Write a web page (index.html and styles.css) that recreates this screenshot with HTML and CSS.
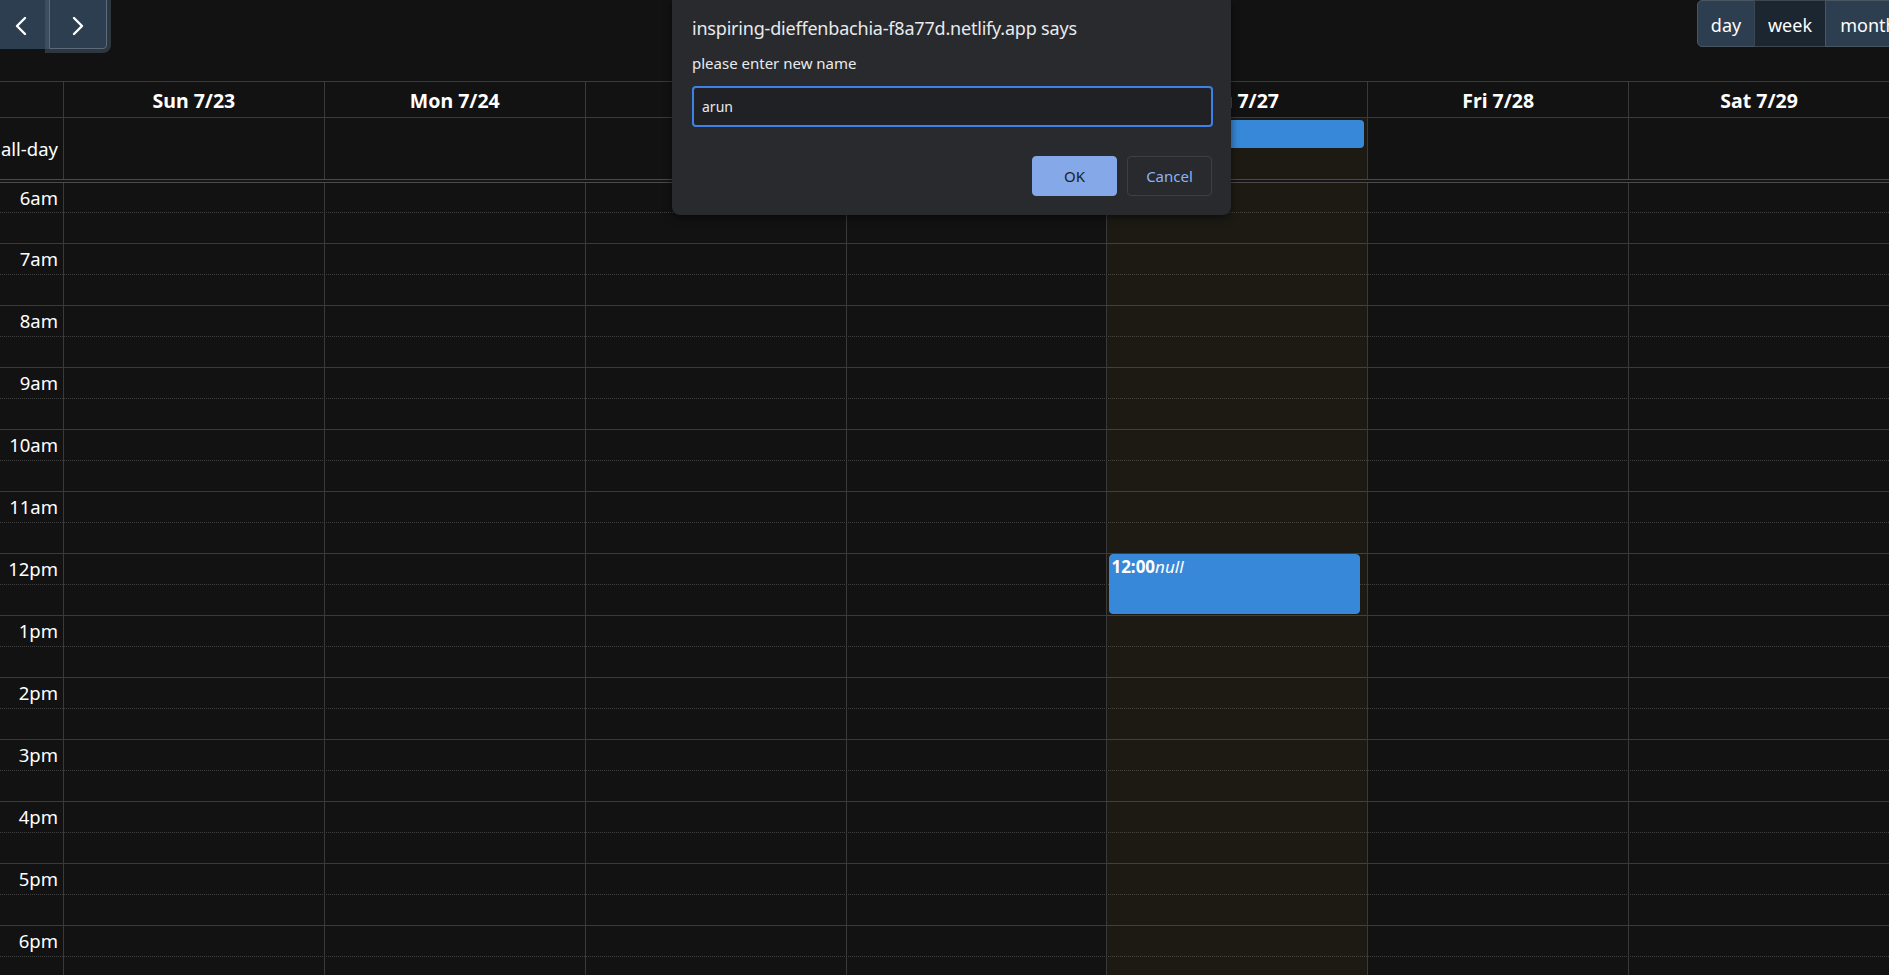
FILE: index.html
```html
<!DOCTYPE html>
<html lang="en">
<head>
<meta charset="utf-8">
<title>Calendar</title>
<link rel="stylesheet" href="styles.css">
</head>
<body>
<div class="page">
  <div class="toolbar">
    <div class="btn-group nav">
      <button class="fc-btn nav-btn prev" type="button" aria-label="prev">
        <svg width="14" height="20" viewBox="0 0 14 20"><polyline points="11,2 3,10 11,18" fill="none" stroke="#fff" stroke-width="2.4" stroke-linecap="round" stroke-linejoin="round"/></svg>
      </button>
      <button class="fc-btn nav-btn next focused" type="button" aria-label="next">
        <svg width="14" height="20" viewBox="0 0 14 20"><polyline points="3,2 11,10 3,18" fill="none" stroke="#fff" stroke-width="2.4" stroke-linecap="round" stroke-linejoin="round"/></svg>
      </button>
    </div>
    <div class="btn-group views">
      <button class="fc-btn view-btn day" type="button">day</button>
      <button class="fc-btn view-btn week active" type="button">week</button>
      <button class="fc-btn view-btn month" type="button">month</button>
    </div>
  </div>

  <div class="cal">
    <div class="row head">
      <div class="axis"></div>
      <div class="hcell">Sun 7/23</div>
      <div class="hcell">Mon 7/24</div>
      <div class="hcell">Tue 7/25</div>
      <div class="hcell">Wed 7/26</div>
      <div class="hcell">Thu 7/27</div>
      <div class="hcell">Fri 7/28</div>
      <div class="hcell">Sat 7/29</div>
    </div>
    <div class="row allday">
      <div class="axis label">all-day</div>
      <div class="acell"></div>
      <div class="acell"></div>
      <div class="acell"></div>
      <div class="acell"></div>
      <div class="acell today"><div class="allday-event"></div></div>
      <div class="acell"></div>
      <div class="acell"></div>
    </div>
    <div class="divider"></div>
    <div class="timegrid">
      <div class="slots">
        <div class="slot major"><span class="slot-label">6am</span></div>
        <div class="slot minor"></div>
        <div class="slot major"><span class="slot-label">7am</span></div>
        <div class="slot minor"></div>
        <div class="slot major"><span class="slot-label">8am</span></div>
        <div class="slot minor"></div>
        <div class="slot major"><span class="slot-label">9am</span></div>
        <div class="slot minor"></div>
        <div class="slot major"><span class="slot-label">10am</span></div>
        <div class="slot minor"></div>
        <div class="slot major"><span class="slot-label">11am</span></div>
        <div class="slot minor"></div>
        <div class="slot major"><span class="slot-label">12pm</span></div>
        <div class="slot minor"></div>
        <div class="slot major"><span class="slot-label">1pm</span></div>
        <div class="slot minor"></div>
        <div class="slot major"><span class="slot-label">2pm</span></div>
        <div class="slot minor"></div>
        <div class="slot major"><span class="slot-label">3pm</span></div>
        <div class="slot minor"></div>
        <div class="slot major"><span class="slot-label">4pm</span></div>
        <div class="slot minor"></div>
        <div class="slot major"><span class="slot-label">5pm</span></div>
        <div class="slot minor"></div>
        <div class="slot major"><span class="slot-label">6pm</span></div>
        <div class="slot minor"></div>
      </div>
      <div class="cols">
        <div class="col"></div>
        <div class="col"></div>
        <div class="col"></div>
        <div class="col"></div>
        <div class="col today">
          <div class="event"><b>12:00</b><i>null</i></div>
        </div>
        <div class="col"></div>
        <div class="col"></div>
      </div>
    </div>
  </div>

  <div class="dialog" role="dialog">
    <div class="dlg-title">inspiring-dieffenbachia-f8a77d.netlify.app says</div>
    <div class="dlg-msg">please enter new name</div>
    <div class="dlg-input">arun</div>
    <div class="dlg-actions">
      <button class="dlg-btn ok" type="button">OK</button>
      <button class="dlg-btn cancel" type="button">Cancel</button>
    </div>
  </div>
</div>
</body>
</html>
```

FILE: styles.css
```css
* { box-sizing: border-box; }

html, body {
  margin: 0;
  padding: 0;
  height: 100%;
}

body {
  background: #121212;
  color: #ffffff;
  font-family: "Noto Sans", "Open Sans", sans-serif;
  overflow: hidden;
}

.page {
  position: relative;
  width: 1889px;
  height: 975px;
  overflow: hidden;
}

/* ---------- toolbar ---------- */
.toolbar {
  display: flex;
  justify-content: space-between;
  align-items: flex-start;
  height: 81px;
  margin: 0 -23px 0 -8px;
}

.btn-group {
  display: flex;
}

.fc-btn {
  display: flex;
  align-items: center;
  justify-content: center;
  padding: 0;
  margin: 0;
  background: #2c3e50;
  border: 1px solid #2c3e50;
  color: #ffffff;
  font-family: "Noto Sans", "Open Sans", sans-serif;
  font-size: 18px;
  cursor: pointer;
}

.nav {
  margin-top: -3px;
}

.nav-btn {
  width: 58px;
  height: 52px;
  padding-top: 6px;
}

.nav-btn.prev {
  width: 58px;
  border-radius: 4px 0 0 4px;
}

.nav-btn.next {
  margin-left: -1px;
  border-radius: 0 4px 4px 0;
}

.nav-btn.focused {
  position: relative;
  z-index: 1;
  border-color: #5b6b7b;
  box-shadow: 0 0 0 4px rgba(76, 91, 106, 0.5);
}

.views {
  height: 47px;
}

.view-btn {
  height: 47px;
  padding-top: 3px;
  border-color: #4b5663;
}

.view-btn.day {
  width: 58px;
  border-radius: 5px 0 0 5px;
}

.view-btn.week {
  width: 72px;
  margin-left: -1px;
  background: #1b2631;
  border-color: #3d4651;
}

.view-btn.month {
  width: 87px;
  margin-left: -1px;
  border-radius: 0 5px 5px 0;
}

/* ---------- calendar ---------- */
.cal {
  border-top: 1px solid #3a3a3a;
}

.row {
  display: grid;
  grid-template-columns: 63px repeat(7, 1fr);
}

.axis {
  display: flex;
  align-items: center;
  justify-content: flex-end;
  white-space: nowrap;
  padding-right: 5px;
  font-size: 18.5px;
}

.head {
  height: 35px;
}

.hcell {
  display: flex;
  align-items: center;
  justify-content: center;
  border-left: 1px solid #3a3a3a;
  font-weight: 700;
  font-size: 19.5px;
  padding-top: 1px;
}

.allday {
  height: 62px;
  border-top: 1px solid #3a3a3a;
}

.acell {
  border-left: 1px solid #3a3a3a;
  padding: 2px 3px 0 2px;
}

.acell.today {
  background: rgba(255, 210, 40, 0.045);
}

.allday-event {
  height: 28px;
  background: #3788d8;
  border-radius: 4px;
}

.divider {
  height: 4px;
  border-top: 1px solid #4a4a4a;
  border-bottom: 1px solid #4a4a4a;
  background: #161616;
}

.timegrid {
  position: relative;
}

.slot {
  height: 31px;
  display: flex;
  align-items: flex-start;
}

.slot:first-child {
  height: 30px;
}

.slot.major {
  border-bottom: 1px dotted #3f3f3f;
}

.slot.minor {
  border-bottom: 1px solid #3a3a3a;
}

.slot-label {
  width: 63px;
  text-align: right;
  padding-right: 5px;
  line-height: 30px;
  padding-top: 0;
  font-size: 18.5px;
  white-space: nowrap;
}

.cols {
  position: absolute;
  top: 0;
  bottom: 0;
  left: 63px;
  right: 0;
  display: grid;
  grid-template-columns: repeat(7, 1fr);
}

.col {
  position: relative;
  border-left: 1px solid #3a3a3a;
}

.col.today {
  background: rgba(255, 210, 40, 0.045);
}

.event {
  position: absolute;
  top: 371px;
  left: 2px;
  right: 7px;
  height: 60px;
  background: #3788d8;
  border: 1px solid #3788d8;
  border-radius: 4px;
  padding: 1px 1px;
  font-size: 17px;
  line-height: 22px;
  color: #ffffff;
  white-space: nowrap;
  overflow: hidden;
}

.event b {
  font-weight: 700;
}

.event i {
  font-style: italic;
}

/* ---------- browser prompt dialog ---------- */
.dialog {
  position: absolute;
  top: 0;
  left: 672px;
  width: 559px;
  height: 215px;
  padding: 16px 18px 19px 20px;
  background: #292a2d;
  border-radius: 0 0 8px 8px;
  box-shadow: 0 2px 8px rgba(0, 0, 0, 0.55);
  color: #e8eaed;
  font-family: "Noto Sans", "Open Sans", sans-serif;
}

.dlg-title {
  font-size: 18px;
  line-height: 24px;
  white-space: nowrap;
  letter-spacing: -0.2px;
}

.dlg-msg {
  margin-top: 13px;
  font-size: 15px;
  line-height: 20px;
}

.dlg-input {
  margin-top: 13px;
  height: 41px;
  border: 2px solid #3f80e6;
  border-radius: 4px;
  background: #202124;
  padding: 0 8px;
  display: flex;
  align-items: center;
  font-size: 14px;
  color: #e8eaed;
}

.dlg-actions {
  margin-top: 29px;
  display: flex;
  justify-content: flex-end;
  gap: 10px;
  padding-right: 1px;
}

.dlg-btn {
  width: 85px;
  height: 40px;
  border-radius: 4px;
  font-family: "Noto Sans", "Open Sans", sans-serif;
  font-size: 15px;
  padding: 0;
}

.dlg-btn.ok {
  background: #84a8e8;
  border: 1px solid #84a8e8;
  color: #202124;
}

.dlg-btn.cancel {
  background: transparent;
  border: 1px solid #3c4043;
  color: #8ab4f8;
}
```
